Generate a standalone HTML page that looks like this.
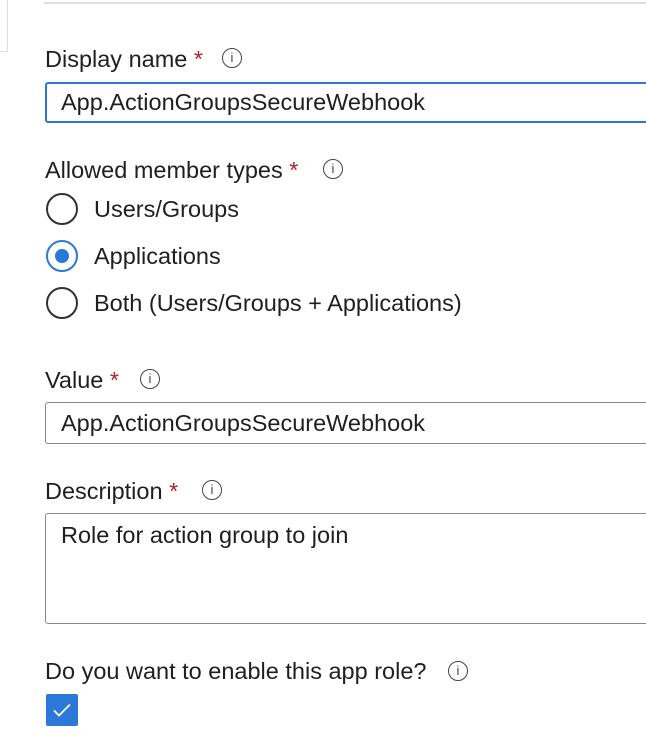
<!DOCTYPE html>
<html><head><style>
body{margin:0;width:646px;height:750px;background:#fff;position:relative;overflow:hidden;font-family:"Liberation Sans",sans-serif;color:#201f1e;}
.a{position:absolute;}
.t{position:absolute;font-size:23.5px;line-height:26px;white-space:nowrap;}
.st{color:#a4262c;}
.i{position:absolute;width:20px;height:20px;border:1.5px solid #444;border-radius:50%;box-sizing:border-box;font-size:13px;line-height:17px;text-align:center;color:#444;}
.box{position:absolute;left:45px;width:620px;border:1.5px solid #8a8886;border-radius:3px;box-sizing:border-box;}
.r{position:absolute;left:46px;width:32px;height:32px;border:2px solid #323130;border-radius:50%;box-sizing:border-box;}
</style></head><body>
<div class="a" style="left:7px;top:0;width:1px;height:52px;background:#ddd"></div>
<div class="a" style="left:0;top:51px;width:8px;height:1px;background:#ddd"></div>
<div class="a" style="left:44px;top:2px;width:602px;height:2px;background:#ddd"></div>

<div class="t" style="left:45px;top:46px">Display name <span class="st">*</span></div>
<div class="i" style="left:222px;top:48px">i</div>
<div class="box" style="top:82px;height:41px;border:2.5px solid #2b78d8"></div>
<div class="t" style="left:61px;top:89px">App.ActionGroupsSecureWebhook</div>

<div class="t" style="left:45px;top:157px">Allowed member types <span class="st">*</span></div>
<div class="i" style="left:323px;top:159px">i</div>
<div class="r" style="top:193px"></div>
<div class="t" style="left:94px;top:196px">Users/Groups</div>
<div class="r" style="top:240px;border-color:#2b78d8"><div class="a" style="left:7px;top:7px;width:14px;height:14px;border-radius:50%;background:#2b78d8"></div></div>
<div class="t" style="left:94px;top:243px">Applications</div>
<div class="r" style="top:287px"></div>
<div class="t" style="left:94px;top:290px">Both (Users/Groups + Applications)</div>

<div class="t" style="left:45px;top:367px">Value <span class="st">*</span></div>
<div class="i" style="left:140px;top:369px">i</div>
<div class="box" style="top:402px;height:42px"></div>
<div class="t" style="left:61px;top:410px">App.ActionGroupsSecureWebhook</div>

<div class="t" style="left:45px;top:478px">Description <span class="st">*</span></div>
<div class="i" style="left:202px;top:480px">i</div>
<div class="box" style="top:513px;height:111px"></div>
<div class="t" style="left:61px;top:522px">Role for action group to join</div>

<div class="t" style="left:45px;top:658px">Do you want to enable this app role?</div>
<div class="i" style="left:448px;top:661px">i</div>
<div class="a" style="left:46px;top:694px;width:32px;height:32px;background:#2b78d8;border-radius:2px">
<svg width="32" height="32" viewBox="0 0 32 32"><path d="M8 16.5l5 5 11-11" stroke="#fff" stroke-width="1.8" fill="none"/></svg></div>
</body></html>
